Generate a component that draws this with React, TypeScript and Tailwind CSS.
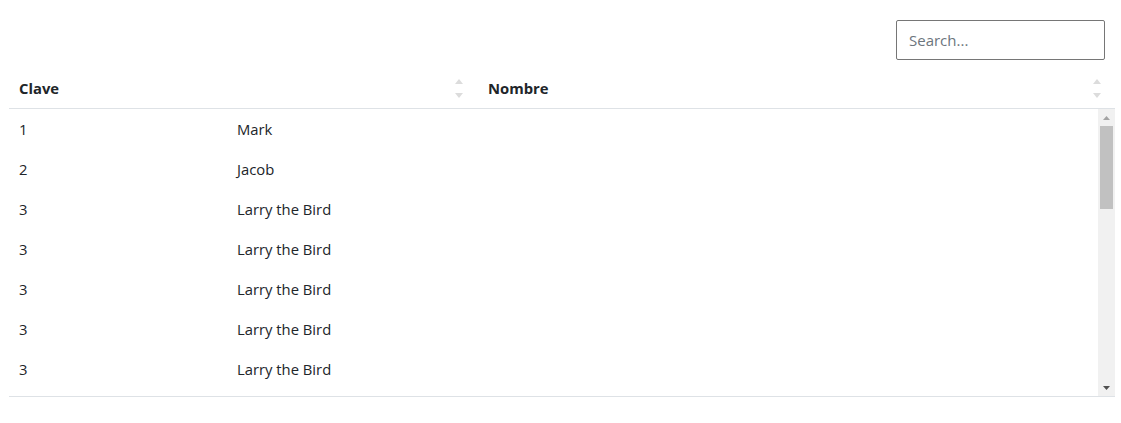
import React from 'react';

const rows = [
  { id: '1', name: 'Mark' },
  { id: '2', name: 'Jacob' },
  { id: '3', name: 'Larry the Bird' },
  { id: '3', name: 'Larry the Bird' },
  { id: '3', name: 'Larry the Bird' },
  { id: '3', name: 'Larry the Bird' },
  { id: '3', name: 'Larry the Bird' },
];

function SortIcon() {
  return (
    <div className="flex flex-col items-center gap-[9px] pt-[1px]">
      <svg width="8" height="5" viewBox="0 0 8 5">
        <path d="M4 0 L8 5 L0 5 Z" fill="#dcdcdc" />
      </svg>
      <svg width="8" height="5" viewBox="0 0 8 5">
        <path d="M0 0 L8 0 L4 5 Z" fill="#dcdcdc" />
      </svg>
    </div>
  );
}

export default function App() {
  return (
    <div className="w-[1121px] h-[423px] bg-white pl-[9px] pr-[6px] pt-[20px] text-[#212529] text-[14.8px]" style={{ fontFamily: '"Segoe UI", "Open Sans", sans-serif' }}>
      {/* search */}
      <div className="flex justify-end pr-[10px]">
        <input
          type="text"
          placeholder="Search..."
          className="w-[209px] h-[40px] px-[12px] border border-[#767676] rounded-[2px] text-[15px] placeholder-[#6c757d] outline-none"
        />
      </div>

      {/* header */}
      <div className="flex h-[39px] mt-[10px] border-b border-[#dee2e6] font-bold">
        <div className="w-[469px] flex items-center justify-between pl-[10px] pr-[15px] pb-[2px]">
          <span>Clave</span>
          <SortIcon />
        </div>
        <div className="flex-1 flex items-center justify-between pl-[10px] pr-[14px] pb-[2px]">
          <span>Nombre</span>
          <SortIcon />
        </div>
      </div>

      {/* body */}
      <div className="flex h-[288px] border-b border-[#dee2e6]">
        <div className="flex-1 overflow-hidden">
          {rows.map((r, i) => (
            <div key={i} className="flex h-[40px] items-center">
              <div className="w-[218px] pl-[10px]">{r.id}</div>
              <div className="pl-[10px]">{r.name}</div>
            </div>
          ))}
        </div>
        {/* scrollbar */}
        <div className="w-[17px] bg-[#f1f1f1] flex flex-col">
          <div className="h-[17px] flex items-center justify-center">
            <svg width="7" height="4" viewBox="0 0 7 4">
              <path d="M3.5 0 L7 4 L0 4 Z" fill="#a3a3a3" />
            </svg>
          </div>
          <div className="flex-1 px-[2px]">
            <div className="h-[83px] bg-[#c1c1c1]" />
          </div>
          <div className="h-[17px] flex items-center justify-center">
            <svg width="7" height="4" viewBox="0 0 7 4">
              <path d="M0 0 L7 0 L3.5 4 Z" fill="#505050" />
            </svg>
          </div>
        </div>
      </div>
    </div>
  );
}
